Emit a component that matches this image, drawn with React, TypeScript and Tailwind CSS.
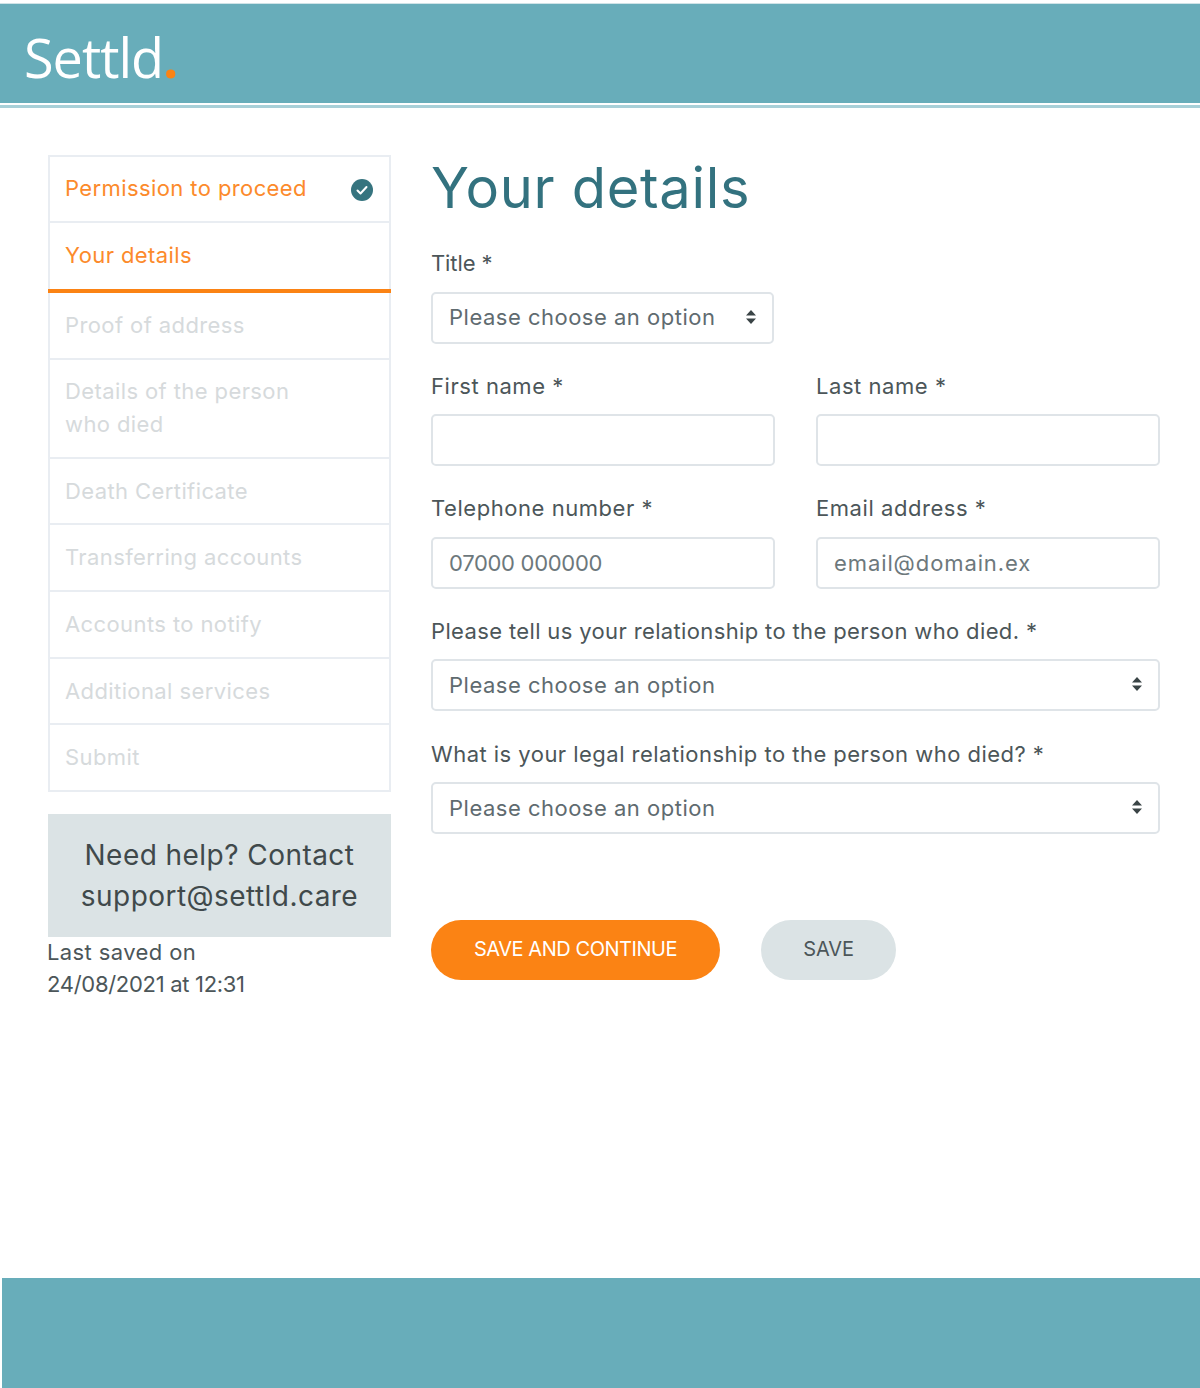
const font = "font-['Inter','Noto_Sans',sans-serif]";

const steps = [
  "Proof of address",
  "Details of the person who died",
  "Death Certificate",
  "Transferring accounts",
  "Accounts to notify",
  "Additional services",
  "Submit",
];

const ChooseSelect = () => (
  <div className="relative">
    <select className="block h-[52px] w-full appearance-none rounded-[5px] border-2 border-[#dfe4e8] bg-white pl-[16px] text-[22px] tracking-[0.5px] text-[#5f6b70] outline-none">
      <option>Please choose an option</option>
    </select>
    <svg
      width="12"
      height="16"
      viewBox="0 0 12 16"
      className="pointer-events-none absolute right-[17px] top-[17px] text-[#3a4446]"
    >
      <path d="M6 1L11 6.5H1Z M6 15L1 9.5H11Z" fill="currentColor" />
    </svg>
  </div>
);

const Field = ({ label, placeholder, inputClass }: { label: string; placeholder?: string; inputClass?: string }) => (
  <div className="flex flex-col gap-[12.5px]">
    <label className="h-[32px] text-[22px] leading-[32px] tracking-[0.55px] text-[#4c5659]">{label}</label>
    <input
      placeholder={placeholder}
      className={`block h-[52px] w-full rounded-[5px] border-2 border-[#dfe4e8] bg-white px-[16px] text-[22px] text-[#5f6b70] outline-none placeholder:text-[#6d787c] ${inputClass ?? ""}`}
    />
  </div>
);

const SelectField = ({ label, labelClass }: { label: string; labelClass: string }) => (
  <div className="flex flex-col gap-[12.5px]">
    <label className={`h-[32px] text-[22px] leading-[32px] text-[#4c5659] ${labelClass}`}>{label}</label>
    <ChooseSelect />
  </div>
);

export default function App() {
  return (
    <div className={`flex min-h-[1388px] flex-col bg-white ${font}`}>
      {/* Header */}
      <header className="mt-[3px] border-t border-b-[3px] border-t-[#cfe3e7] border-b-[#a8d0d8] pb-[2px]">
        <div className="h-[99px] bg-[#68adba] pl-[24px] pt-[20px]">
          <span className="font-['Open_Sans',sans-serif] text-[54px] leading-[66px] tracking-[-1px] text-white">
            Settld<span className="font-bold text-[#fb8314]">.</span>
          </span>
        </div>
      </header>

      {/* Content */}
      <div className="mt-[47px] flex items-start gap-[40px] pl-[48px] pr-[40px]">
        <aside className="w-[343px] shrink-0">
          <div className="border-2 border-b-0 border-[#e9edf2]">
            <div className="flex h-[66px] items-center justify-between border-b-2 border-[#e9edf2] pl-[15px] pr-[15px] text-[22px] tracking-[0.4px] text-[#fc8a2b]">
              <span className="-mt-[1px]">Permission to proceed</span>
              <svg width="24" height="24" viewBox="0 0 24 24" className="mt-[2px]">
                <circle cx="12" cy="12" r="11" fill="#36747f" />
                <path d="M7.5 12.5L10.5 15.5L16.5 9" fill="none" stroke="#fff" strokeWidth="2" strokeLinecap="round" strokeLinejoin="round" />
              </svg>
            </div>
            <div className="-mx-[2px] flex h-[70px] items-center border-b-4 border-[#fb8314] pb-[2px] pl-[17px] text-[22px] tracking-[0.4px] text-[#fc8a2b]">
              Your details
            </div>
            {steps.map((step) => (
              <div
                key={step}
                className="flex min-h-[66.7px] items-center border-b-2 border-[#e9edf2] py-[15.5px] pl-[15px] pr-[80px] text-[22px] leading-[33px] tracking-[0.4px] text-[#d6dadc]"
              >
                {step}
              </div>
            ))}
          </div>
          <div className="mt-[21.5px] flex h-[123px] flex-col justify-center bg-[#dbe3e5] pt-[2px] text-center text-[28px] leading-[41px] tracking-[0.45px] text-[#40494b]">
            <p>Need help? Contact</p>
            <p>support@settld.care</p>
          </div>
          <p className="-ml-[1px] -mt-[1px] text-[22px] leading-[32px] text-[#4c5659]">
            <span className="tracking-[0.4px]">Last saved on</span>
            <br />
            <span className="tracking-[-0.3px]">24/08/2021 at 12:31</span>
          </p>
        </aside>

        <main className="min-w-0 flex-1">
          <h1 className="h-[80px] text-[56px] leading-[66px] tracking-[0.7px] text-[#33727f]">Your details</h1>
          <div className="mt-[12px] flex flex-col gap-[26.17px]">
            <div className="w-[343px]">
              <SelectField label="Title *" labelClass="tracking-[-0.1px]" />
            </div>
            <div className="grid grid-cols-2 gap-[41px]">
              <Field label="First name *" />
              <Field label="Last name *" />
            </div>
            <div className="grid grid-cols-2 gap-[41px]">
              <Field label="Telephone number *" placeholder="07000 000000" inputClass="tracking-[-0.3px]" />
              <Field label="Email address *" placeholder="email@domain.ex" inputClass="tracking-[0.9px]" />
            </div>
            <SelectField
              label="Please tell us your relationship to the person who died. *"
              labelClass="tracking-[0.36px]"
            />
            <SelectField
              label="What is your legal relationship to the person who died? *"
              labelClass="tracking-[0.47px]"
            />
          </div>
          <div className="mt-[85.5px] flex gap-[41px]">
            <button className="h-[60px] w-[289px] rounded-full bg-[#fb8314] pb-[2px] text-[20px] tracking-[-0.45px] text-white">
              SAVE AND CONTINUE
            </button>
            <button className="h-[60px] w-[135px] rounded-full bg-[#dbe3e5] pb-[2px] text-[20px] tracking-[-0.1px] text-[#4c5659]">
              SAVE
            </button>
          </div>
        </main>
      </div>

      {/* Footer */}
      <footer className="mt-auto ml-[2px] h-[110px] bg-[#68adba]" />
    </div>
  );
}
